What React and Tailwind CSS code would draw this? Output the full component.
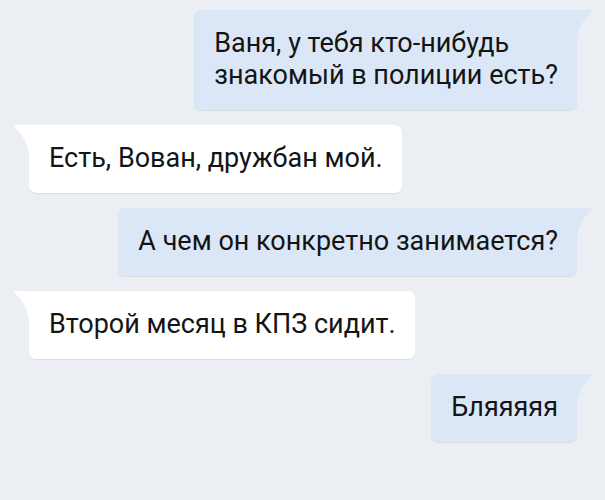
const messages = [
  { out: true, lines: ["Ваня, у тебя кто-нибудь", "знакомый в полиции есть?"] },
  { out: false, lines: ["Есть, Вован, дружбан мой."] },
  { out: true, lines: ["А чем он конкретно занимается?"] },
  { out: false, lines: ["Второй месяц в КПЗ сидит."] },
  { out: true, lines: ["Бляяяяя"] },
];

const Tail = ({ out }) =>
  out ? (
    <svg
      className="absolute top-0 left-full"
      width="16"
      height="30"
      viewBox="0 0 16 30"
    >
      <path d="M0 0 L16 0 C9 7 1 16 0 30 Z" fill="#dbe7f7" />
    </svg>
  ) : (
    <svg
      className="absolute top-0 right-full"
      width="16"
      height="30"
      viewBox="0 0 16 30"
    >
      <path d="M16 0 L0 0 C7 7 15 16 16 30 Z" fill="#ffffff" />
    </svg>
  );

const Bubble = ({ out, lines }) => (
  <div
    className={`relative rounded-[7px] pl-[20px] pr-[19px] pt-[17px] pb-[19px] text-[27px] leading-[32px] text-[#141414] shadow-[0_1px_1px_rgba(0,0,0,0.08)] ${
      out
        ? "self-end mr-[28px] bg-[#dbe7f7] rounded-tr-none"
        : "self-start ml-[29px] bg-white rounded-tl-none"
    }`}
  >
    <Tail out={out} />
    {lines.map((line, i) => (
      <div key={i} className="whitespace-nowrap">
        {line}
      </div>
    ))}
  </div>
);

export default function App() {
  return (
    <div
      className="w-[605px] h-[500px] bg-[#ebeff3] flex flex-col gap-[15px] pt-[10px] overflow-hidden"
      style={{ fontFamily: "Roboto, 'Noto Sans', sans-serif" }}
    >
      {messages.map((m, i) => (
        <Bubble key={i} out={m.out} lines={m.lines} />
      ))}
    </div>
  );
}
